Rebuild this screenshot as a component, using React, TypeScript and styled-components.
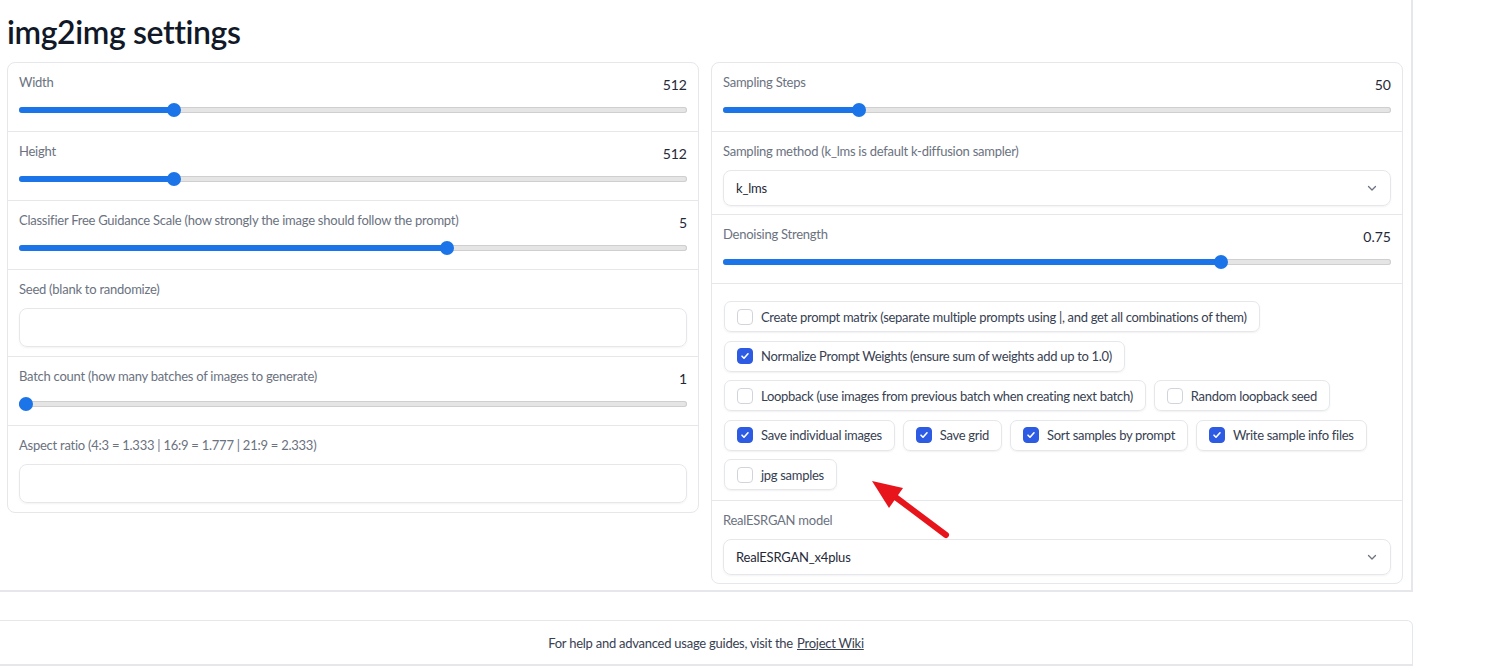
import * as React from 'react'
import styled, { createGlobalStyle } from 'styled-components'

const GlobalStyle = createGlobalStyle`
  html, body {
    margin: 0;
    padding: 0;
    background: #ffffff;
    font-family: Lato, 'Liberation Sans', sans-serif;
    color: #374151;
  }
`

const blue = '#1c74e9'
const border = '#e5e7eb'

const Page = styled.div`
  position: relative;
  width: 1413px;
  box-sizing: border-box;
  padding: 10px 8px 6px 7px;
  border-right: 2px solid ${border};
  border-bottom: 2px solid ${border};
`

const Title = styled.h1`
  margin: 0 0 8px;
  height: 44px;
  line-height: 44px;
  font-size: 32px;
  font-weight: 600;
  letter-spacing: -0.4px;
  color: #111827;
`

const Columns = styled.div`
  display: grid;
  grid-template-columns: 1fr 1fr;
  gap: 12px;
  align-items: start;
`

const Panel = styled.div`
  border: 1px solid ${border};
  border-radius: 8px;
  overflow: hidden;
  background: #fff;
`

const Row = styled.div<{ $pad?: string }>`
  padding: ${(p) => p.$pad || '10px 11px 9px'};
  & + & {
    border-top: 1px solid ${border};
  }
`

const LabelLine = styled.div`
  display: flex;
  justify-content: space-between;
  align-items: flex-start;
  height: 19px;
`

const Label = styled.span`
  font-size: 13px;
  line-height: 18px;
  letter-spacing: -0.25px;
  color: #6b7280;
`

const Value = styled.span`
  font-size: 14px;
  line-height: 18px;
  margin-top: 3px;
  color: #1f2937;
`

const SliderArea = styled.div`
  height: 20px;
  margin-top: 8px;
  display: flex;
  align-items: center;
`

const Track = styled.div`
  position: relative;
  flex: 1;
  height: 6px;
  border-radius: 4px;
  background: #e5e5e5;
  box-shadow: inset 0 0 0 1px #cfcfcf;
`

const Fill = styled.div`
  height: 100%;
  border-radius: 4px;
  background: ${blue};
`

const Thumb = styled.div`
  position: absolute;
  top: 50%;
  width: 14px;
  height: 14px;
  margin: -7px 0 0 -7px;
  border-radius: 50%;
  background: ${blue};
`

const TextBox = styled.div<{ $h: number }>`
  height: ${(p) => p.$h}px;
  margin-top: 9px;
  box-sizing: border-box;
  border: 1px solid ${border};
  border-radius: 8px;
  box-shadow: 0 1px 2px rgba(0, 0, 0, 0.05);
  display: flex;
  align-items: center;
  justify-content: space-between;
  padding: 0 12px;
  font-size: 13px;
  letter-spacing: -0.2px;
  color: #1f2937;
`

const ChipGroup = styled.div`
  display: flex;
  flex-wrap: wrap;
  gap: 8.5px 8px;
  padding: 7px 0 0;
`

const Chip = styled.label`
  display: flex;
  align-items: center;
  gap: 8px;
  height: 31px;
  box-sizing: border-box;
  padding: 0 12px;
  border: 1px solid ${border};
  border-radius: 7px;
  box-shadow: 0 1px 2px rgba(0, 0, 0, 0.06);
  font-size: 13px;
  letter-spacing: -0.3px;
  color: #374151;
`

const Box = styled.span<{ $on: boolean }>`
  width: 16px;
  height: 16px;
  box-sizing: border-box;
  border-radius: 4px;
  border: 1px solid ${(p) => (p.$on ? '#2d5be3' : '#d1d5db')};
  background: ${(p) => (p.$on ? '#2d5be3' : '#fff')};
  display: flex;
  align-items: center;
  justify-content: center;
`

const Footer = styled.div`
  width: 1413px;
  box-sizing: border-box;
  margin-top: 28px;
  height: 46px;
  border-top: 1px solid ${border};
  border-right: 1px solid ${border};
  border-bottom: 2px solid ${border};
  border-top-right-radius: 6px;
  display: flex;
  align-items: center;
  justify-content: center;
  font-size: 13px;
  letter-spacing: -0.25px;
  color: #374151;
`

const Link = styled.a`
  margin-left: 4px;
  color: #374151;
  text-decoration: underline;
`

const ArrowOverlay = styled.svg`
  position: absolute;
  left: 860px;
  top: 470px;
`

const Slider = ({ label, value, pct }: { label: string; value: string; pct: number }) => {
  const pos = `calc(7px + (100% - 14px) * ${pct / 100})`
  return (
    <Row $pad='10px 11px 11px'>
      <LabelLine>
        <Label>{label}</Label>
        <Value>{value}</Value>
      </LabelLine>
      <SliderArea>
        <Track>
          <Fill style={{ width: pos }} />
          <Thumb style={{ left: pos }} />
        </Track>
      </SliderArea>
    </Row>
  )
}

const Field = ({ label }: { label: string }) => (
  <Row>
    <LabelLine>
      <Label>{label}</Label>
    </LabelLine>
    <TextBox $h={39} />
  </Row>
)

const Chevron = () => (
  <svg width='12' height='12' viewBox='0 0 12 12' fill='none'>
    <path d='M2.5 4.5L6 8l3.5-3.5' stroke='#6b7280' strokeWidth='1.3' strokeLinecap='round' strokeLinejoin='round' />
  </svg>
)

const Dropdown = ({ label, value }: { label: string; value: string }) => (
  <Row $pad='10px 11px 8px'>
    <LabelLine>
      <Label>{label}</Label>
    </LabelLine>
    <TextBox $h={36}>
      <span>{value}</span>
      <Chevron />
    </TextBox>
  </Row>
)

const Check = ({ label, on }: { label: string; on?: boolean }) => (
  <Chip>
    <Box $on={!!on}>
      {on && (
        <svg width='10' height='10' viewBox='0 0 10 10' fill='none'>
          <path d='M2 5.2l2 2 4-4.4' stroke='#fff' strokeWidth='1.6' strokeLinecap='round' strokeLinejoin='round' />
        </svg>
      )}
    </Box>
    {label}
  </Chip>
)

export default function App() {
  return (
    <>
      <GlobalStyle />
      <Page>
        <Title>img2img settings</Title>
        <Columns>
          <Panel>
            <Slider label='Width' value='512' pct={22.6} />
            <Slider label='Height' value='512' pct={22.6} />
            <Slider
              label='Classifier Free Guidance Scale (how strongly the image should follow the prompt)'
              value='5'
              pct={64.4}
            />
            <Field label='Seed (blank to randomize)' />
            <Slider label='Batch count (how many batches of images to generate)' value='1' pct={0} />
            <Field label='Aspect ratio (4:3 = 1.333 | 16:9 = 1.777 | 21:9 = 2.333)' />
          </Panel>
          <Panel>
            <Slider label='Sampling Steps' value='50' pct={19.7} />
            <Dropdown label='Sampling method (k_lms is default k-diffusion sampler)' value='k_lms' />
            <Slider label='Denoising Strength' value='0.75' pct={75} />
            <Row $pad='10px 12px 10px'>
              <ChipGroup>
                <Check label='Create prompt matrix (separate multiple prompts using |, and get all combinations of them)' />
                <Check label='Normalize Prompt Weights (ensure sum of weights add up to 1.0)' on />
                <Check label='Loopback (use images from previous batch when creating next batch)' />
                <Check label='Random loopback seed' />
                <Check label='Save individual images' on />
                <Check label='Save grid' on />
                <Check label='Sort samples by prompt' on />
                <Check label='Write sample info files' on />
                <Check label='jpg samples' />
              </ChipGroup>
            </Row>
            <Dropdown label='RealESRGAN model' value='RealESRGAN_x4plus' />
          </Panel>
        </Columns>
        <ArrowOverlay width='100' height='80' viewBox='0 0 100 80'>
          <path d='M86 65L30 23' stroke='#e8141b' strokeWidth='6' strokeLinecap='round' />
          <polygon points='12,11 43,18 29,38' fill='#e8141b' />
        </ArrowOverlay>
      </Page>
      <Footer>
        For help and advanced usage guides, visit the<Link>Project Wiki</Link>
      </Footer>
    </>
  )
}
